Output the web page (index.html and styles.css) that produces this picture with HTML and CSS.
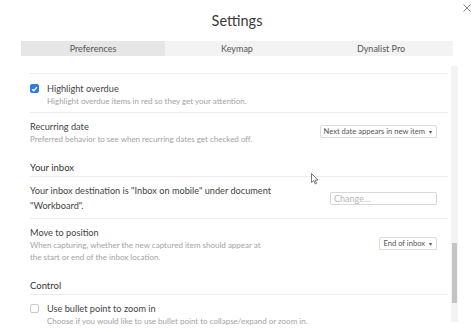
FILE: index.html
```html
<html>
  <head>
    <title>Settings</title>
    <link rel="stylesheet" href="styles.css">
  </head>
  <body>
    <div class="close">
      <svg width="8" height="8" viewBox="0 0 8 8"><path d="M0.5 0.5 L7.5 7.5 M7.5 0.5 L0.5 7.5" stroke="#888" stroke-width="1" fill="none"/></svg>
    </div>

    <div class="title">Settings</div>

    <div class="tabs">
      <div class="tab active">Preferences</div>
      <div class="tab">Keymap</div>
      <div class="tab">Dynalist Pro</div>
    </div>

    <div class="main">
      <div class="content">

        <div class="row check first">
          <span class="box checked">
            <svg width="8" height="8" viewBox="0 0 8 8"><path d="M1.3 4.2 L3.2 6 L6.8 1.9" stroke="#fff" stroke-width="1.5" fill="none"/></svg>
          </span>
          <div class="text">
            <div class="name">Highlight overdue</div>
            <div class="desc">Highlight overdue items in red so they get your attention.</div>
          </div>
        </div>

        <div class="row">
          <div class="text">
            <div class="name">Recurring date</div>
            <div class="desc">Preferred behavior to see when recurring dates get checked off.</div>
          </div>
          <span class="select">Next date appears in new item <i>&#9662;</i></span>
        </div>

        <div class="section">Your inbox</div>

        <div class="row inbox">
          <div class="text">
            <div class="plain">Your inbox destination is "Inbox on mobile" under document<br>"Workboard".</div>
          </div>
          <span class="input">Change...</span>
        </div>

        <div class="row">
          <div class="text">
            <div class="name">Move to position</div>
            <div class="desc">When capturing, whether the new captured item should appear at<br>the start or end of the inbox location.</div>
          </div>
          <span class="select">End of inbox <i>&#9662;</i></span>
        </div>

        <div class="section">Control</div>

        <div class="row check">
          <span class="box"></span>
          <div class="text">
            <div class="name">Use bullet point to zoom in</div>
            <div class="desc">Choose if you would like to use bullet point to collapse/expand or zoom in.</div>
          </div>
        </div>

      </div>
      <div class="scrollbar">
        <div class="thumb"></div>
      </div>
    </div>

    <div class="cursor">
      <svg width="8" height="12" viewBox="0 0 8 12"><path d="M0.5 0.5 L0.5 9.5 L2.7 7.6 L4.3 11 L5.6 10.4 L4.1 7.1 L7 7.1 Z" fill="#fff" stroke="#555" stroke-width="0.8"/></svg>
    </div>
  </body>
</html>
```

FILE: styles.css
```css
body {
  margin: 0;
  background-color: #fff;
  font-family: Lato, "Open Sans", sans-serif;
  color: #444;
}

.close {
  position: absolute;
  top: 4px;
  right: 3px;
  width: 8px;
  height: 8px;
}

.close svg {
  display: block;
}

.title {
  padding-top: 11px;
  height: 20px;
  line-height: 20px;
  font-size: 14.5px;
  text-align: center;
  color: #3a3a3a;
}

.tabs {
  display: flex;
  margin: 10px 21px 0 21px;
  height: 15px;
  background-color: #f3f3f3;
}

.tab {
  flex: 1;
  text-align: center;
  line-height: 15px;
  font-size: 9px;
  color: #555;
}

.tab.active {
  background-color: #e6e6e6;
}

.main {
  display: flex;
  padding-left: 30px;
}

.content {
  width: 418px;
  padding-top: 17px;
}

.row {
  display: flex;
  align-items: center;
  justify-content: space-between;
  border-top: 1px solid #ececec;
  padding: 7px 11px 5px 0;
}

.row.first {
  padding-top: 8px;
}

.row.check {
  justify-content: flex-start;
  align-items: flex-start;
}

.row.inbox {
  padding-top: 6px;
}

.name {
  font-size: 9.2px;
  line-height: 13px;
  white-space: nowrap;
}

.desc {
  font-size: 8px;
  line-height: 12px;
  color: #a3a3a3;
  white-space: nowrap;
}

.plain {
  font-size: 9.2px;
  line-height: 15px;
  white-space: nowrap;
}

.box {
  width: 9px;
  height: 9px;
  margin: 2px 8px 0 0;
  border: 1px solid #c8c8c8;
  border-radius: 2px;
  background-color: #fff;
  box-sizing: border-box;
  display: flex;
  align-items: center;
  justify-content: center;
}

.box.checked {
  background-color: #2d7fd8;
  border-color: #2d7fd8;
}

.box svg {
  display: block;
}

.section {
  padding: 12px 0 2px 0;
  font-size: 9.5px;
  line-height: 12px;
  color: #333;
}

.select {
  height: 13px;
  line-height: 11px;
  box-sizing: border-box;
  padding: 0 4px 0 3px;
  border: 1px solid #dcdcdc;
  border-radius: 2px;
  font-size: 7.6px;
  color: #555;
  white-space: nowrap;
  margin-top: -2px;
}

.select i {
  font-style: normal;
  font-size: 6px;
  margin-left: 2px;
}

.input {
  width: 107px;
  height: 13px;
  line-height: 11px;
  box-sizing: border-box;
  padding-left: 3px;
  border: 1px solid #d8d8d8;
  border-radius: 2px;
  font-size: 9px;
  color: #b8b8b8;
}

.scrollbar {
  width: 7px;
  height: 256px;
  margin: 10px 0 0 3px;
  background-color: #f3f3f3;
}

.thumb {
  width: 5px;
  height: 60px;
  margin: 177px 0 0 1px;
  background-color: #c4c4c4;
}

.cursor {
  position: absolute;
  left: 311px;
  top: 173px;
}

.cursor svg {
  display: block;
}
```
